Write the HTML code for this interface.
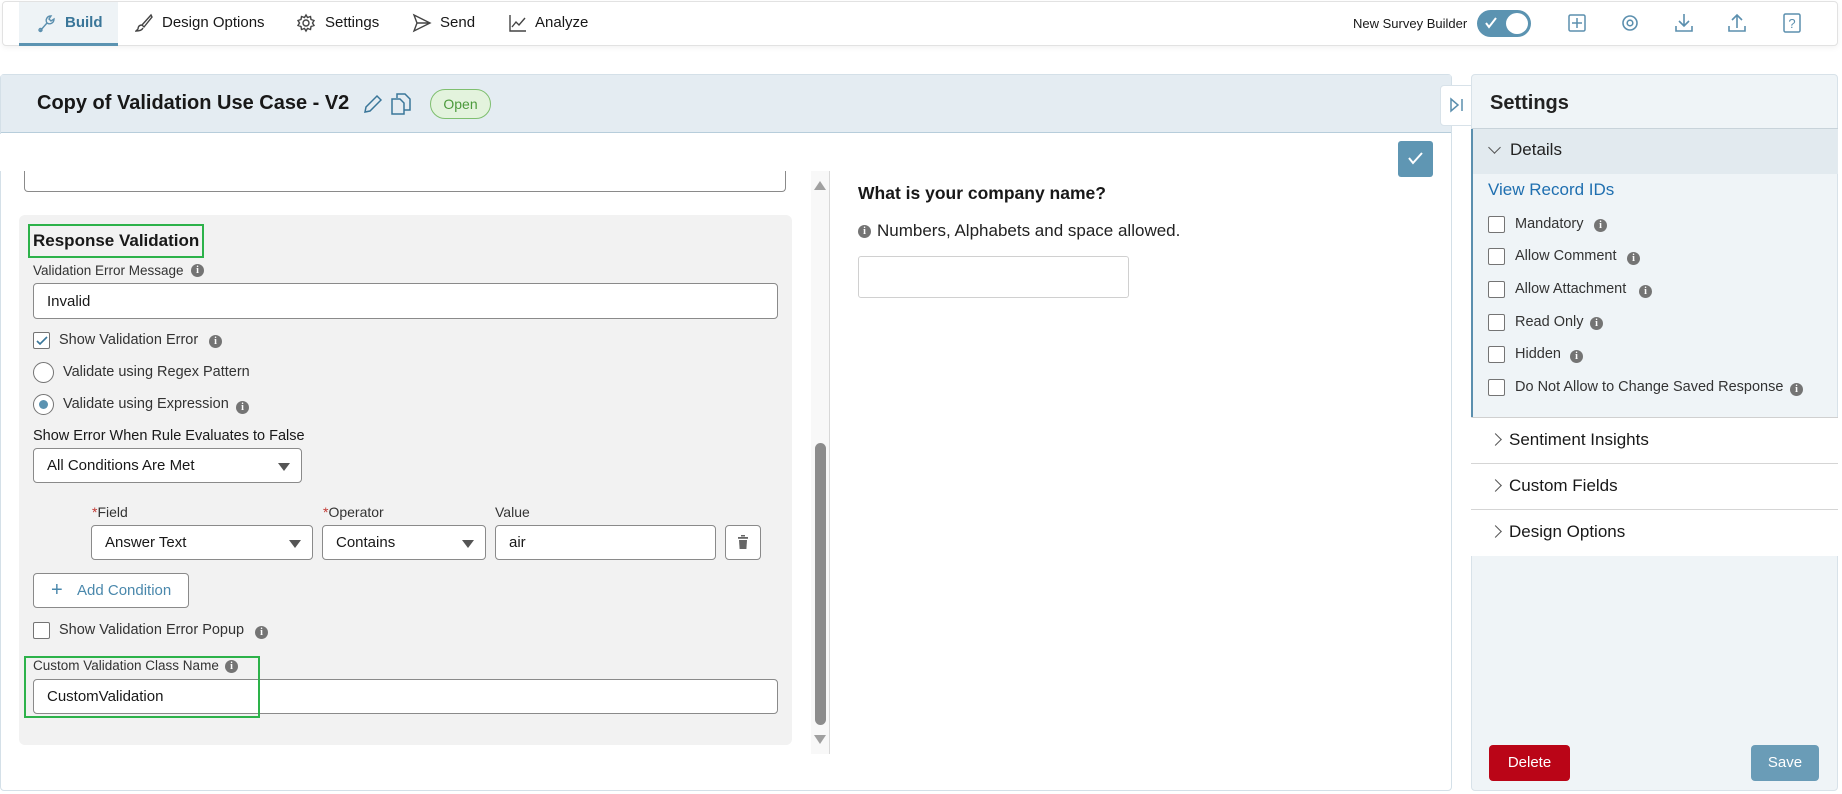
<!DOCTYPE html>
<html><head><meta charset="utf-8"><style>
*{box-sizing:border-box;margin:0;padding:0}
body{width:1842px;height:794px;background:#fff;font-family:"Liberation Sans",sans-serif;color:#181818;position:relative;overflow:hidden}
.a{position:absolute}
.t{position:absolute;white-space:nowrap}
.info{position:absolute;width:13px;height:13px;border-radius:50%;background:#747474;color:#fff;font-size:10px;font-weight:bold;text-align:center;line-height:13px;font-family:"Liberation Serif",serif}
.cb{position:absolute;width:17px;height:17px;border:1px solid #747474;border-radius:2px;background:#fff}
.inp{position:absolute;background:#fff;border:1px solid #8a8a8a;border-radius:4px;font-size:15px;padding-left:13px;display:flex;align-items:center}
.caret{position:absolute;right:11px;top:50%;margin-top:-3px;width:0;height:0;border-left:6px solid transparent;border-right:6px solid transparent;border-top:8px solid #555}
.nav{font-size:15px;color:#181818}
.row{position:absolute;left:1471px;width:367px;height:46px;background:#fff;border-bottom:1px solid #d5d5d5;font-size:17px}
.chev{position:absolute;left:20px;top:17px;width:9px;height:9px;border-right:1.5px solid #555;border-top:1.5px solid #555;transform:rotate(45deg)}
</style></head><body>
<div class="a" style="left:2px;top:1px;width:1836px;height:45px;border:1px solid #e2e2e2;border-radius:4px;background:#fff;box-shadow:0 2px 6px rgba(0,0,0,.05)"></div>
<div class="a" style="left:19px;top:2px;width:99px;height:44px;background:#eef3f6;border-bottom:3px solid #5b93b1"></div>
<svg class="a" style="left:37px;top:13px" width="18" height="20" viewBox="0 0 18 20" fill="none" stroke="#5b8fae" stroke-width="1.4"><path d="M3 18l7-8M10 10c-2-3 0-7 4-7l-2 3 2 2 3-2c0 4-4 6-7 4"/><circle cx="3.5" cy="17" r="1.5"/></svg>
<div class="t nav" style="left:65px;top:14px;color:#3a7699;font-weight:bold">Build</div>
<svg class="a" style="left:135px;top:13px" width="18" height="20" viewBox="0 0 18 20" fill="none" stroke="#444" stroke-width="1.4"><path d="M16 2L7 12l2 2L17 4zM7 12c-3 0-4 2-4 4-1 1-2 2-2 2 3 0 6-1 7-3"/></svg>
<div class="t nav" style="left:162px;top:14px">Design Options</div>
<svg class="a" style="left:296px;top:13px" width="20" height="20" viewBox="0 0 20 20" fill="none" stroke="#444" stroke-width="1.4"><circle cx="10" cy="10" r="3"/><path d="M10 2l1.5 2.5 3-1 .5 3 3 1-1.5 2.5 1.5 2.5-3 1-.5 3-3-1L10 18l-1.5-2.5-3 1-.5-3-3-1L3.5 10 2 7.5l3-1 .5-3 3 1z"/></svg>
<div class="t nav" style="left:325px;top:14px">Settings</div>
<svg class="a" style="left:412px;top:13px" width="20" height="20" viewBox="0 0 20 20" fill="none" stroke="#444" stroke-width="1.4"><path d="M2 2l16 8-16 8 3-8zM5 10h13"/></svg>
<div class="t nav" style="left:440px;top:14px">Send</div>
<svg class="a" style="left:508px;top:13px" width="20" height="20" viewBox="0 0 20 20" fill="none" stroke="#444" stroke-width="1.4"><path d="M2 2v16h16M4 14l4-5 3 3 6-7"/></svg>
<div class="t nav" style="left:535px;top:14px">Analyze</div>
<div class="t" style="left:1353px;top:16px;font-size:13px">New Survey Builder</div>
<div class="a" style="left:1477px;top:10px;width:54px;height:27px;border-radius:14px;background:#5b93b1"></div>
<div class="a" style="left:1506px;top:13px;width:22px;height:21px;border-radius:50%;background:#fff"></div>
<svg class="a" style="left:1484px;top:16px" width="14" height="14" viewBox="0 0 14 14" fill="none" stroke="#fff" stroke-width="2"><path d="M2 7l3 4 7-9"/></svg>
<svg class="a" style="left:1567px;top:13px" width="20" height="20" viewBox="0 0 20 20" fill="none" stroke="#5b8fae" stroke-width="1.5"><rect x="2" y="2" width="16" height="16" rx="1.5"/><path d="M10 5v10M5 10h10"/></svg>
<svg class="a" style="left:1620px;top:13px" width="20" height="20" viewBox="0 0 20 20" fill="none" stroke="#5b8fae" stroke-width="1.6"><circle cx="10" cy="10" r="7"/><circle cx="10" cy="10" r="2.8"/></svg>
<svg class="a" style="left:1674px;top:12px" width="20" height="22" viewBox="0 0 20 22" fill="none" stroke="#5b8fae" stroke-width="1.6"><path d="M10 2v12M5 9l5 5 5-5M2 14v5h16v-5"/></svg>
<svg class="a" style="left:1727px;top:12px" width="20" height="22" viewBox="0 0 20 22" fill="none" stroke="#5b8fae" stroke-width="1.6"><path d="M10 16V3M5 8l5-5 5 5M2 14v5h16v-5"/></svg>
<svg class="a" style="left:1782px;top:12px" width="20" height="22" viewBox="0 0 20 22" fill="none" stroke="#5b8fae" stroke-width="1.5"><rect x="2" y="2" width="16" height="18" rx="1.5"/><text x="10" y="16" font-size="13" text-anchor="middle" fill="#5b8fae" stroke="none" font-family="Liberation Sans">?</text></svg>

<div class="a" style="left:0;top:74px;width:1452px;height:717px;border:1px solid #d4e0e8;border-radius:4px;background:#fff"></div>
<div class="a" style="left:1px;top:75px;width:1450px;height:58px;background:#e4ecf2;border-bottom:1px solid #b7cddb"></div>
<div class="t" style="left:37px;top:92px;font-size:20px;font-weight:bold">Copy of Validation Use Case - V2</div>
<svg class="a" style="left:363px;top:94px" width="20" height="20" viewBox="0 0 20 20" fill="none" stroke="#3a7699" stroke-width="1.5"><path d="M14 2l4 4L7 17l-5 1 1-5z"/></svg>
<svg class="a" style="left:390px;top:92px" width="22" height="24" viewBox="0 0 22 24" fill="none" stroke="#3a7699" stroke-width="1.5"><path d="M7 6V2h8l5 5v11h-6"/><path d="M2 7h8l4 4v11H2z"/></svg>
<div class="a" style="left:430px;top:89px;width:61px;height:30px;border:1px solid #7fbf6f;border-radius:15px;background:#e3f3dd;color:#4c9a3c;font-size:14px;text-align:center;line-height:28px">Open</div>

<div class="a" style="left:1440px;top:85px;width:32px;height:41px;background:#fff;border:1px solid #d8e2e9;border-radius:4px 0 0 4px"></div>
<svg class="a" style="left:1448px;top:96px" width="18" height="18" viewBox="0 0 18 18" fill="none" stroke="#5b8fae" stroke-width="1.5"><path d="M3 3l7 6-7 6zM14 3v12"/></svg>

<div class="a" style="left:24px;top:150px;width:762px;height:42px;border:1px solid #8a8a8a;border-top:none;border-radius:0 0 4px 4px;background:#fff"></div>
<div class="a" style="left:0;top:134px;width:830px;height:37px;background:#fff"></div>
<div class="a" style="left:19px;top:215px;width:773px;height:530px;background:#f2f2f2;border-radius:6px"></div>
<div class="a" style="left:28px;top:224px;width:176px;height:34px;border:2.5px solid #2db24a"></div>
<div class="t" style="left:33px;top:231px;font-size:17px;font-weight:bold">Response Validation</div>
<div class="t" style="left:33px;top:263px;font-size:13.5px;color:#333">Validation Error Message</div>
<div class="info" style="left:191px;top:264px">i</div>
<div class="inp" style="left:33px;top:283px;width:745px;height:36px">Invalid</div>
<div class="cb" style="left:33px;top:332px"></div>
<svg class="a" style="left:36px;top:336px" width="12" height="10" viewBox="0 0 12 10" fill="none" stroke="#3a7699" stroke-width="1.6"><path d="M1 5l3 3 7-7"/></svg>
<div class="t" style="left:59px;top:332px;font-size:14.5px;color:#333">Show Validation Error</div>
<div class="info" style="left:209px;top:335px">i</div>
<div class="a" style="left:33px;top:362px;width:21px;height:21px;border:1px solid #747474;border-radius:50%;background:#fff"></div>
<div class="t" style="left:63px;top:364px;font-size:14.5px;color:#333">Validate using Regex Pattern</div>
<div class="a" style="left:33px;top:394px;width:21px;height:21px;border:1px solid #747474;border-radius:50%;background:#fff"></div>
<div class="a" style="left:39px;top:400px;width:9px;height:9px;border-radius:50%;background:#5b93b1"></div>
<div class="t" style="left:63px;top:396px;font-size:14.5px;color:#333">Validate using Expression</div>
<div class="info" style="left:236px;top:401px">i</div>
<div class="t" style="left:33px;top:428px;font-size:14.5px">Show Error When Rule Evaluates to False</div>
<div class="inp" style="left:33px;top:448px;width:269px;height:35px">All Conditions Are Met<span class="caret"></span></div>
<div class="t" style="left:92px;top:504px;font-size:14px;color:#333"><span style="color:#c23934">*</span>Field</div>
<div class="t" style="left:323px;top:504px;font-size:14px;color:#333"><span style="color:#c23934">*</span>Operator</div>
<div class="t" style="left:495px;top:504px;font-size:14px;color:#333">Value</div>
<div class="inp" style="left:91px;top:525px;width:222px;height:35px">Answer Text<span class="caret"></span></div>
<div class="inp" style="left:322px;top:525px;width:164px;height:35px">Contains<span class="caret"></span></div>
<div class="inp" style="left:495px;top:525px;width:221px;height:35px">air</div>
<div class="a" style="left:725px;top:525px;width:36px;height:35px;border:1px solid #8a8a8a;border-radius:4px;background:#fff"></div>
<svg class="a" style="left:737px;top:534px" width="12" height="16" viewBox="0 0 12 16" fill="#666"><rect x="1" y="3" width="10" height="1.8"/><rect x="4" y="1" width="4" height="1.5"/><path d="M2 6h8l-.6 9H2.6z"/></svg>
<div class="a" style="left:33px;top:573px;width:156px;height:35px;border:1px solid #8a8a8a;border-radius:4px;background:#fff"></div>
<div class="t" style="left:51px;top:579px;font-size:20px;color:#4a88ac;font-weight:300">+</div>
<div class="t" style="left:77px;top:582px;font-size:15px;color:#4a88ac">Add Condition</div>
<div class="cb" style="left:33px;top:622px"></div>
<div class="t" style="left:59px;top:622px;font-size:14.5px;color:#333">Show Validation Error Popup</div>
<div class="info" style="left:255px;top:626px">i</div>
<div class="t" style="left:33px;top:658px;font-size:13.5px;color:#333">Custom Validation Class Name</div>
<div class="info" style="left:225px;top:660px">i</div>
<div class="inp" style="left:33px;top:679px;width:745px;height:35px">CustomValidation</div>
<div class="a" style="left:24px;top:656px;width:236px;height:62px;border:2.5px solid #2db24a"></div>

<div class="a" style="left:811px;top:171px;width:18px;height:583px;background:#f8f8f8"></div>
<div class="a" style="left:829px;top:171px;width:1px;height:583px;background:#d8d8d8"></div>
<div class="a" style="left:814px;top:181px;border-left:6px solid transparent;border-right:6px solid transparent;border-bottom:9px solid #a0a0a0"></div>
<div class="a" style="left:815px;top:443px;width:11px;height:282px;border-radius:6px;background:#8c8c8c"></div>
<div class="a" style="left:814px;top:735px;border-left:6px solid transparent;border-right:6px solid transparent;border-top:9px solid #a0a0a0"></div>

<div class="a" style="left:1398px;top:141px;width:35px;height:36px;background:#5f96b3;border-radius:3px"></div>
<svg class="a" style="left:1407px;top:151px" width="17" height="14" viewBox="0 0 17 14" fill="none" stroke="#fff" stroke-width="2"><path d="M2 7l4 5 9-10"/></svg>
<div class="t" style="left:858px;top:183px;font-size:17.5px;font-weight:bold">What is your company name?</div>
<div class="info" style="left:858px;top:225px">i</div>
<div class="t" style="left:877px;top:221px;font-size:17px;color:#222">Numbers, Alphabets and space allowed.</div>
<div class="a" style="left:858px;top:256px;width:271px;height:42px;border:1px solid #d0d0d0;border-radius:3px"></div>

<div class="a" style="left:1471px;top:74px;width:367px;height:717px;background:#eff4f7;border:1px solid #d8e2e9;border-radius:4px"></div>
<div class="t" style="left:1490px;top:92px;font-size:20px;font-weight:bold;color:#222">Settings</div>
<div class="a" style="left:1472px;top:128px;width:366px;height:1px;background:#c8d3da"></div>
<div class="a" style="left:1472px;top:129px;width:366px;height:45px;background:#e2eaef"></div>
<div class="a" style="left:1471px;top:129px;width:2px;height:288px;background:#5b8fae"></div>
<div class="a" style="left:1490px;top:143px;width:9px;height:9px;border-right:1.5px solid #555;border-bottom:1.5px solid #555;transform:rotate(45deg)"></div>
<div class="t" style="left:1510px;top:140px;font-size:17px;color:#222">Details</div>
<div class="t" style="left:1488px;top:180px;font-size:17px;color:#1f6fb0">View Record IDs</div>
<div class="cb" style="left:1488px;top:216px"></div><div class="t" style="left:1515px;top:216px;font-size:14.5px;color:#333">Mandatory</div><div class="info" style="left:1594px;top:219px">i</div>
<div class="cb" style="left:1488px;top:248px"></div><div class="t" style="left:1515px;top:248px;font-size:14.5px;color:#333">Allow Comment</div><div class="info" style="left:1627px;top:252px">i</div>
<div class="cb" style="left:1488px;top:281px"></div><div class="t" style="left:1515px;top:281px;font-size:14.5px;color:#333">Allow Attachment</div><div class="info" style="left:1639px;top:285px">i</div>
<div class="cb" style="left:1488px;top:314px"></div><div class="t" style="left:1515px;top:314px;font-size:14.5px;color:#333">Read Only</div><div class="info" style="left:1590px;top:317px">i</div>
<div class="cb" style="left:1488px;top:346px"></div><div class="t" style="left:1515px;top:346px;font-size:14.5px;color:#333">Hidden</div><div class="info" style="left:1570px;top:350px">i</div>
<div class="cb" style="left:1488px;top:379px"></div><div class="t" style="left:1515px;top:379px;font-size:14.5px;color:#333">Do Not Allow to Change Saved Response</div><div class="info" style="left:1790px;top:383px">i</div>
<div class="a" style="left:1472px;top:417px;width:366px;height:1px;background:#d0d0d0"></div>
<div class="row" style="top:418px"><div class="chev"></div><div class="t" style="left:38px;top:12px">Sentiment Insights</div></div>
<div class="row" style="top:464px"><div class="chev"></div><div class="t" style="left:38px;top:12px">Custom Fields</div></div>
<div class="row" style="top:510px;border-bottom:none"><div class="chev"></div><div class="t" style="left:38px;top:12px">Design Options</div></div>
<div class="a" style="left:1489px;top:745px;width:81px;height:36px;background:#ba0517;border-radius:4px;color:#fff;font-size:15px;text-align:center;line-height:36px">Delete</div>
<div class="a" style="left:1751px;top:745px;width:68px;height:36px;background:#6a9cb7;border-radius:4px;color:#fff;font-size:15px;text-align:center;line-height:36px">Save</div>
</body></html>
